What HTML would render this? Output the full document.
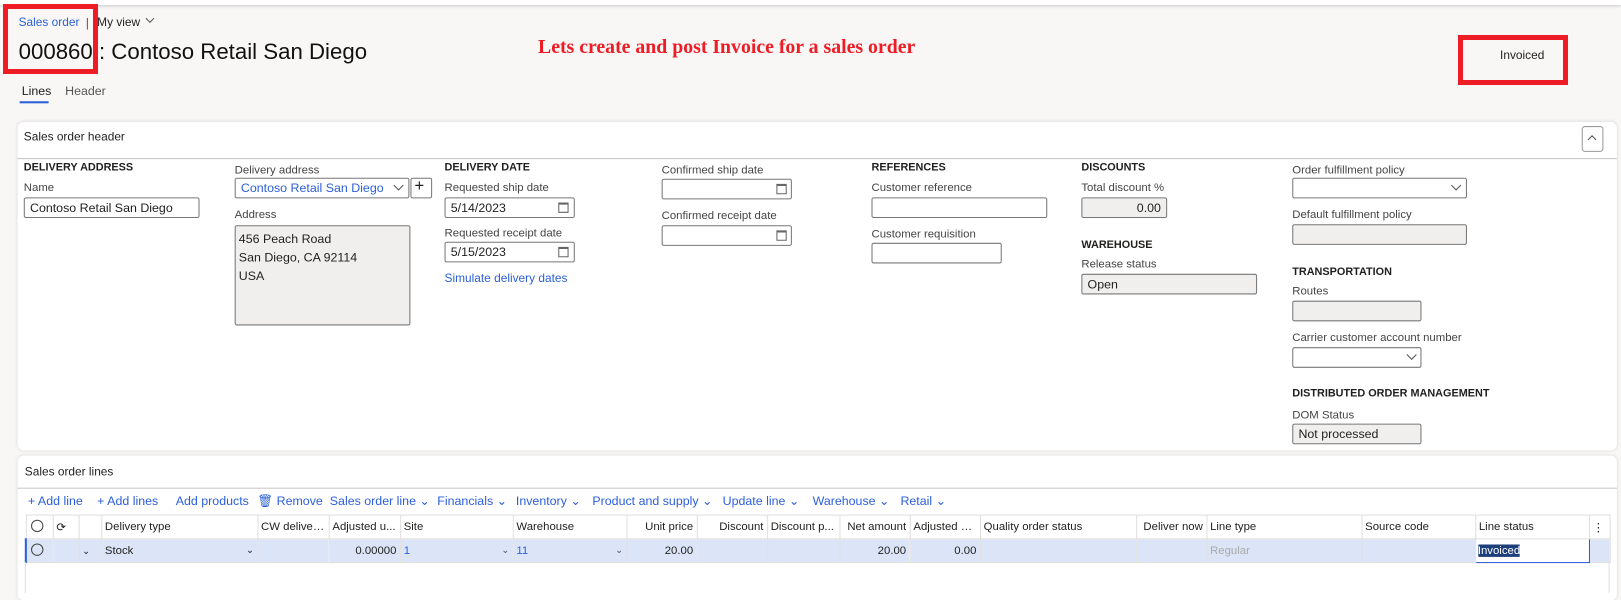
<!DOCTYPE html>
<html><head><meta charset="utf-8"><style>
*{box-sizing:border-box;margin:0;padding:0}
html,body{width:1621px;height:592px;overflow:hidden;background:#f8f7f6;font-family:"Liberation Sans",sans-serif;color:#201f1e}
#w{position:absolute;left:0;top:0;width:1568px;height:573px;transform:scale(1.0338,1.0332);transform-origin:0 0}
.a{position:absolute;white-space:nowrap}
.lbl{font-size:11px;color:#444}
.h{font-size:10.5px;font-weight:bold;color:#201f1e}
.in{position:absolute;height:20px;border:1px solid #777;border-radius:2px;background:#fff;font-size:12px;padding:2px 5px;white-space:nowrap}
.g{background:#f0efee}
.card{position:absolute;background:#fff;border-radius:6px;box-shadow:0 0 3px rgba(0,0,0,.15)}
.chev{position:absolute;width:7px;height:7px;border-right:1px solid #555;border-bottom:1px solid #555;transform:rotate(45deg)}
.lnk{color:#2b5fd9}
.tb{font-size:12px;color:#2b5fd9}
table{border-collapse:collapse;position:absolute;left:24px;top:498px;width:1532px;font-size:11px;table-layout:fixed}
td{border:1px solid #e1dfdd;height:23px;padding:0 3px;white-space:nowrap;overflow:hidden;text-overflow:ellipsis}
tr.d td{background:#dbe5f7}
.r{text-align:right}
.cal{position:absolute;width:10px;height:10px;border:1px solid #666;border-top-width:2px}
</style></head><body>
<div style="position:absolute;left:0;top:0;width:1621px;height:5px;background:#fff;box-shadow:0 1px 3px rgba(0,0,0,.2)"></div>
<div id="w">
<div class="a lnk" style="left:18px;top:16px;font-size:11.5px">Sales order</div>
<div class="a" style="left:83px;top:15px;font-size:12px;color:#555">|</div>
<div class="a" style="left:94px;top:16px;font-size:11.5px">My view</div>
<div class="chev" style="left:142px;top:15px;width:6px;height:6px"></div>
<div class="a" style="left:18px;top:38px;font-size:21.5px;font-weight:normal;color:#111">000860 : Contoso Retail San Diego</div>
<div class="a" style="left:1451px;top:48px;font-size:11.5px">Invoiced</div>
<div class="a" style="left:21px;top:81px;font-size:12px">Lines</div>
<div class="a" style="left:19px;top:98px;width:28px;height:2px;background:#2b5fd9"></div>
<div class="a" style="left:63px;top:81px;font-size:12px;color:#555">Header</div>

<div class="card" style="left:17px;top:118px;width:1547px;height:318px"></div>
<div class="a" style="left:23px;top:127px;font-size:11.5px;font-weight:500">Sales order header</div>
<div class="a" style="left:17px;top:153px;width:1547px;height:1px;background:#c8c6c4"></div>
<div class="a" style="left:1530px;top:122px;width:21px;height:25px;border:1px solid #999;border-radius:3px;background:#fff"></div>
<div class="chev" style="left:1537px;top:132px;width:6px;height:6px;transform:rotate(225deg)"></div>

<div class="a h" style="left:23px;top:156px">DELIVERY ADDRESS</div>
<div class="a lbl" style="left:23px;top:176px">Name</div>
<div class="in" style="left:23px;top:191px;width:170px">Contoso Retail San Diego</div>

<div class="a lbl" style="left:227px;top:159px">Delivery address</div>
<div class="in lnk" style="left:227px;top:172px;width:169px">Contoso Retail San Diego</div>
<div class="chev" style="left:382px;top:176px"></div>
<div class="in" style="left:397px;top:172px;width:21px;font-size:16px;padding:0 3px;line-height:16px">+</div>
<div class="a lbl" style="left:227px;top:202px">Address</div>
<div class="in g" style="left:227px;top:218px;width:170px;height:97px;line-height:18px;padding:3px 3px">456 Peach Road<br>San Diego, CA 92114<br>USA</div>

<div class="a h" style="left:430px;top:156px">DELIVERY DATE</div>
<div class="a lbl" style="left:430px;top:176px">Requested ship date</div>
<div class="in" style="left:430px;top:191px;width:126px">5/14/2023</div><div class="cal" style="left:540px;top:196px"></div>
<div class="a lbl" style="left:430px;top:220px">Requested receipt date</div>
<div class="in" style="left:430px;top:234px;width:126px">5/15/2023</div><div class="cal" style="left:540px;top:239px"></div>
<div class="a lnk" style="left:430px;top:264px;font-size:11.5px">Simulate delivery dates</div>

<div class="a lbl" style="left:640px;top:159px">Confirmed ship date</div>
<div class="in" style="left:640px;top:173px;width:126px"></div><div class="cal" style="left:751px;top:178px"></div>
<div class="a lbl" style="left:640px;top:203px">Confirmed receipt date</div>
<div class="in" style="left:640px;top:218px;width:126px"></div><div class="cal" style="left:751px;top:223px"></div>

<div class="a h" style="left:843px;top:156px">REFERENCES</div>
<div class="a lbl" style="left:843px;top:176px">Customer reference</div>
<div class="in" style="left:843px;top:191px;width:170px"></div>
<div class="a lbl" style="left:843px;top:221px">Customer requisition</div>
<div class="in" style="left:843px;top:235px;width:126px"></div>

<div class="a h" style="left:1046px;top:156px">DISCOUNTS</div>
<div class="a lbl" style="left:1046px;top:176px">Total discount %</div>
<div class="in g r" style="left:1046px;top:191px;width:83px">0.00</div>
<div class="a h" style="left:1046px;top:231px">WAREHOUSE</div>
<div class="a lbl" style="left:1046px;top:250px">Release status</div>
<div class="in g" style="left:1046px;top:265px;width:170px">Open</div>

<div class="a lbl" style="left:1250px;top:159px">Order fulfillment policy</div>
<div class="in" style="left:1250px;top:172px;width:169px"></div><div class="chev" style="left:1405px;top:176px"></div>
<div class="a lbl" style="left:1250px;top:202px">Default fulfillment policy</div>
<div class="in g" style="left:1250px;top:217px;width:169px"></div>
<div class="a h" style="left:1250px;top:257px">TRANSPORTATION</div>
<div class="a lbl" style="left:1250px;top:276px">Routes</div>
<div class="in g" style="left:1250px;top:291px;width:125px"></div>
<div class="a lbl" style="left:1250px;top:321px">Carrier customer account number</div>
<div class="in" style="left:1250px;top:336px;width:125px"></div><div class="chev" style="left:1362px;top:340px"></div>
<div class="a h" style="left:1250px;top:375px">DISTRIBUTED ORDER MANAGEMENT</div>
<div class="a lbl" style="left:1250px;top:396px">DOM Status</div>
<div class="in g" style="left:1250px;top:410px;width:125px">Not processed</div>

<div class="card" style="left:17px;top:441px;width:1547px;height:140px"></div>
<div class="a" style="left:24px;top:451px;font-size:11.5px;font-weight:500">Sales order lines</div>
<div class="a" style="left:17px;top:472px;width:1547px;height:1px;background:#c8c6c4"></div>
<div class="a tb" style="left:27px;top:478px">+ Add line</div>
<div class="a tb" style="left:94px;top:478px">+ Add lines</div>
<div class="a tb" style="left:170px;top:478px">Add products</div>
<div class="a tb" style="left:249px;top:478px">&#x1F5D1;&#xFE0E; Remove</div>
<div class="a tb" style="left:319px;top:478px">Sales order line ⌄</div>
<div class="a tb" style="left:423px;top:478px">Financials ⌄</div>
<div class="a tb" style="left:499px;top:478px">Inventory ⌄</div>
<div class="a tb" style="left:573px;top:478px">Product and supply ⌄</div>
<div class="a tb" style="left:699px;top:478px">Update line ⌄</div>
<div class="a tb" style="left:786px;top:478px">Warehouse ⌄</div>
<div class="a tb" style="left:871px;top:478px">Retail ⌄</div>

<table>
<colgroup><col style="width:26px"><col style="width:25px"><col style="width:22px"><col style="width:151px"><col style="width:69px"><col style="width:69px"><col style="width:109px"><col style="width:110px"><col style="width:68px"><col style="width:68px"><col style="width:70px"><col style="width:68px"><col style="width:68px"><col style="width:151px"><col style="width:68px"><col style="width:150px"><col style="width:110px"><col style="width:110px"><col style="width:20px"></colgroup>
<tr style="background:#fff"><td style="padding:0 4px"><span style="display:inline-block;width:12px;height:12px;border:1px solid #444;border-radius:50%"></span></td><td>⟳</td><td></td><td>Delivery type</td><td>CW deliver...</td><td>Adjusted u...</td><td>Site</td><td>Warehouse</td><td class="r">Unit price</td><td class="r">Discount</td><td>Discount p...</td><td class="r">Net amount</td><td>Adjusted n...</td><td>Quality order status</td><td class="r">Deliver now</td><td>Line type</td><td>Source code</td><td>Line status</td><td>⋮</td></tr>
<tr class="d"><td style="padding:0 4px;border-left:2px solid #2b5fd9"><span style="display:inline-block;width:12px;height:12px;border:1px solid #444;border-radius:50%"></span></td><td></td><td style="font-size:9px">⌄</td><td>Stock<span style="float:right;font-size:9px">⌄</span></td><td></td><td class="r">0.00000</td><td class="lnk">1<span style="float:right;font-size:9px;color:#555">⌄</span></td><td class="lnk">11<span style="float:right;font-size:9px;color:#555">⌄</span></td><td class="r">20.00</td><td></td><td></td><td class="r">20.00</td><td class="r">0.00</td><td></td><td></td><td style="color:#aaa">Regular</td><td></td><td style="background:#fff;border:1px solid #2b5fd9;padding:0 2px"><span style="background:#1d3f7a;color:#fff">Invoiced</span></td><td></td></tr>
</table>
<div class="a" style="left:24px;top:544px;width:1px;height:30px;background:#e1dfdd"></div>
<div class="a" style="left:1556px;top:544px;width:1px;height:30px;background:#e1dfdd"></div>
</div>
<div class="a" style="left:538px;top:36px;font-family:'Liberation Serif',serif;font-weight:bold;font-size:19.8px;color:#ee1c25">Lets create and post Invoice for a sales order</div>
<div class="a" style="left:3px;top:4px;width:95px;height:70px;border:5px solid #ee1c25"></div>
<div class="a" style="left:1458px;top:35px;width:110px;height:50px;border:5px solid #ee1c25"></div>
</body></html>
